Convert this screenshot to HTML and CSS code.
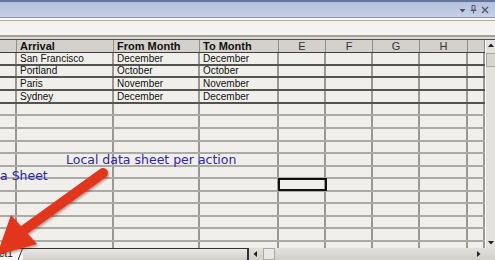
FILE: index.html
```html
<!DOCTYPE html>
<html lang="en">
<head>
    <meta charset="UTF-8">
    <title>Local Data Sheet</title>
    <link rel="stylesheet" href="styles.css">
</head>
<body>

<div class="window">
    <div class="titlebar">
        <svg class="tb-icon" width="7" height="8" viewBox="0 0 7 8"><path d="M0.5 3 L6.5 3 L3.5 6.5 Z" fill="#4f5566"/></svg>
        <svg class="tb-icon" width="7" height="9" viewBox="0 0 7 9"><path d="M2 0.5 H5 V5 H2 Z M0.5 5.5 H6.5 M3.5 5.5 V8.5" stroke="#4f5566" stroke-width="1" fill="none"/></svg>
        <svg class="tb-icon" width="8" height="8" viewBox="0 0 8 8"><path d="M1 1 L7 7 M7 1 L1 7" stroke="#4f5566" stroke-width="1.3"/></svg>
    </div>
    <div class="sep"></div>
    <div class="formula"></div>
    <div class="gap"></div>

    <div class="grid-area">
        <div class="sheet">
            <div class="row head">
                <div class="cell"></div>
                <div class="cell">Arrival</div>
                <div class="cell">From Month</div>
                <div class="cell">To Month</div>
                <div class="cell letter">E</div>
                <div class="cell letter">F</div>
                <div class="cell letter">G</div>
                <div class="cell letter">H</div>
                <div class="cell"></div>
            </div>
            <div class="row data">
                <div class="cell"></div><div class="cell">San Francisco</div><div class="cell">December</div><div class="cell">December</div>
                <div class="cell"></div><div class="cell"></div><div class="cell"></div><div class="cell"></div><div class="cell"></div>
            </div>
            <div class="row data short">
                <div class="cell"></div><div class="cell">Portland</div><div class="cell">October</div><div class="cell">October</div>
                <div class="cell"></div><div class="cell"></div><div class="cell"></div><div class="cell"></div><div class="cell"></div>
            </div>
            <div class="row data">
                <div class="cell"></div><div class="cell">Paris</div><div class="cell">November</div><div class="cell">November</div>
                <div class="cell"></div><div class="cell"></div><div class="cell"></div><div class="cell"></div><div class="cell"></div>
            </div>
            <div class="row data">
                <div class="cell"></div><div class="cell">Sydney</div><div class="cell">December</div><div class="cell">December</div>
                <div class="cell"></div><div class="cell"></div><div class="cell"></div><div class="cell"></div><div class="cell"></div>
            </div>
            <div class="row short"><div class="cell"></div><div class="cell"></div><div class="cell"></div><div class="cell"></div><div class="cell"></div><div class="cell"></div><div class="cell"></div><div class="cell"></div><div class="cell"></div></div>
            <div class="row"><div class="cell"></div><div class="cell"></div><div class="cell"></div><div class="cell"></div><div class="cell"></div><div class="cell"></div><div class="cell"></div><div class="cell"></div><div class="cell"></div></div>
            <div class="row"><div class="cell"></div><div class="cell"></div><div class="cell"></div><div class="cell"></div><div class="cell"></div><div class="cell"></div><div class="cell"></div><div class="cell"></div><div class="cell"></div></div>
            <div class="row short"><div class="cell"></div><div class="cell"></div><div class="cell"></div><div class="cell"></div><div class="cell"></div><div class="cell"></div><div class="cell"></div><div class="cell"></div><div class="cell"></div></div>
            <div class="row"><div class="cell"></div><div class="cell"></div><div class="cell"></div><div class="cell"></div><div class="cell"></div><div class="cell"></div><div class="cell"></div><div class="cell"></div><div class="cell"></div></div>
            <div class="row short"><div class="cell"></div><div class="cell"></div><div class="cell"></div><div class="cell"></div><div class="cell"></div><div class="cell"></div><div class="cell"></div><div class="cell"></div><div class="cell"></div></div>
            <div class="row"><div class="cell"></div><div class="cell"></div><div class="cell"></div><div class="cell"></div><div class="cell selected"></div><div class="cell"></div><div class="cell"></div><div class="cell"></div><div class="cell"></div></div>
            <div class="row short"><div class="cell"></div><div class="cell"></div><div class="cell"></div><div class="cell"></div><div class="cell"></div><div class="cell"></div><div class="cell"></div><div class="cell"></div><div class="cell"></div></div>
            <div class="row"><div class="cell"></div><div class="cell"></div><div class="cell"></div><div class="cell"></div><div class="cell"></div><div class="cell"></div><div class="cell"></div><div class="cell"></div><div class="cell"></div></div>
            <div class="row short"><div class="cell"></div><div class="cell"></div><div class="cell"></div><div class="cell"></div><div class="cell"></div><div class="cell"></div><div class="cell"></div><div class="cell"></div><div class="cell"></div></div>
            <div class="row"><div class="cell"></div><div class="cell"></div><div class="cell"></div><div class="cell"></div><div class="cell"></div><div class="cell"></div><div class="cell"></div><div class="cell"></div><div class="cell"></div></div>
            <div class="row"><div class="cell"></div><div class="cell"></div><div class="cell"></div><div class="cell"></div><div class="cell"></div><div class="cell"></div><div class="cell"></div><div class="cell"></div><div class="cell"></div></div>
        </div>

        <div class="vscroll">
            <div class="sbtn"><svg width="6" height="4" viewBox="0 0 6 4"><path d="M0 4 L3 0.5 L6 4 Z" fill="#222"/></svg></div>
            <div class="vthumb"></div>
            <div class="spacer"></div>
            <div class="sbtn"><svg width="6" height="4" viewBox="0 0 6 4"><path d="M0 0 L3 3.5 L6 0 Z" fill="#222"/></svg></div>
        </div>
    </div>

    <div class="bottombar">
        <div class="tab">et1</div>
        <svg class="tab-edge" width="5" height="12" viewBox="0 0 5 12"><path d="M0 12 L4.5 0.5" stroke="#333" stroke-width="1"/><path d="M0.5 0.5 H5" stroke="#333"/></svg>
        <div class="tabstrip"></div>
        <div class="hscroll">
            <div class="hbtn"><svg width="4" height="6" viewBox="0 0 4 6"><path d="M4 0 L0.5 3 L4 6 Z" fill="#222"/></svg></div>
            <div class="hthumb"></div>
            <div class="spacer"></div>
            <div class="hbtn"><svg width="4" height="6" viewBox="0 0 4 6"><path d="M0 0 L3.5 3 L0 6 Z" fill="#222"/></svg></div>
            <div class="corner"></div>
        </div>
    </div>

    <!-- annotation layer -->
    <div class="note note-local">Local data sheet per action</div>
    <div class="note note-global">a Sheet</div>
    <svg class="arrow" width="495" height="260" viewBox="0 0 495 260">
        <defs>
            <filter id="shadow" x="-20%" y="-20%" width="140%" height="140%">
                <feDropShadow dx="1" dy="1.5" stdDeviation="1" flood-color="#6a1a10" flood-opacity="0.45"/>
            </filter>
        </defs>
        <g filter="url(#shadow)" fill="#e2351f">
            <line x1="103" y1="173" x2="24" y2="230" stroke="#e2351f" stroke-width="10" stroke-linecap="round"/>
            <path d="M-3 255 L11 215 L37 244 Z"/>
        </g>
    </svg>
</div>

</body>
</html>
```

FILE: styles.css
```css
body {
    margin: 0;
    padding: 0;
    background-color: #fff;
    font-family: "Liberation Sans", Arial, sans-serif;
}
.window {
    position: relative;
    width: 495px;
    height: 260px;
    overflow: hidden;
    background-color: #f0efeb;
}
.titlebar {
    height: 18px;
    box-sizing: border-box;
    border-top: 2px solid #65749d;
    border-bottom: 1px solid #8e96ad;
    background: linear-gradient(#b5c0dc, #c7d0e7);
    display: flex;
    justify-content: flex-end;
    align-items: center;
    gap: 4px;
    padding-right: 6px;
}
.tb-icon {
    display: block;
}
.sep {
    height: 2px;
    background-color: #fafaf8;
}
.formula {
    height: 17px;
    box-sizing: border-box;
    border-top: 1px solid #aaa7a0;
    border-bottom: 2px solid #a3a098;
    background-color: #f4f3ef;
}
.gap {
    height: 2px;
    background-color: #dcd9d3;
}
.grid-area {
    display: flex;
    height: 209px;
    box-sizing: border-box;
    border-top: 1px solid #4d4d4d;
}
.sheet {
    width: 485px;
    overflow: hidden;
    background-color: #f0efeb;
}
.row {
    display: grid;
    grid-template-columns: 17px 97px 86px 79px 47px 47px 47px 48px 17px;
    height: 13px;
    box-sizing: border-box;
    border-bottom: 2px solid #acaaa6;
}
.row.short {
    height: 12px;
}
.row.head {
    background-color: #d4d1ca;
    border-bottom: 1px solid #3e3e3e;
}
.row.data {
    border-bottom-color: #555350;
}
.cell {
    border-right: 2px solid #9a9894;
    padding-left: 3px;
    font-size: 10px;
    line-height: 11px;
    color: #111;
    white-space: nowrap;
    overflow: hidden;
}
.short .cell {
    line-height: 10px;
}
.head .cell {
    font-size: 11px;
    line-height: 12px;
    font-weight: bold;
    border-right: 1px solid #8f8d89;
}
.head .letter {
    font-weight: normal;
    text-align: center;
    padding-left: 0;
    color: #333;
}
.cell.selected {
    overflow: visible;
    outline: 2px solid #111;
    outline-offset: -1px;
}
.vscroll {
    width: 10px;
    box-sizing: border-box;
    border-left: 1px solid #fdfdfc;
    background-color: #e4e2de;
    display: flex;
    flex-direction: column;
}
.sbtn {
    height: 10px;
    display: flex;
    justify-content: center;
    align-items: center;
}
.vthumb {
    height: 14px;
    margin-top: 3px;
    box-sizing: border-box;
    border: 1px solid #a9a7a2;
    border-right: none;
    background-color: #d7d5d0;
}
.spacer {
    flex: 1;
}
.bottombar {
    display: flex;
    height: 12px;
    background-color: #d9d7d2;
}
.tab {
    width: 18px;
    background-color: #f7f7f5;
    font-size: 10px;
    line-height: 11px;
    color: #111;
    text-indent: -1px;
    white-space: nowrap;
    overflow: hidden;
}
.tab-edge {
    display: block;
    background-color: #f7f7f5;
}
.tabstrip {
    width: 226px;
    box-sizing: border-box;
    border-top: 1px solid #333;
    border-right: 2px solid #333;
    background: linear-gradient(#ebeae6, #cfcdc8);
}
.hscroll {
    flex: 1;
    display: flex;
    align-items: stretch;
    background: linear-gradient(#e2e0dc, #d2d0cb);
}
.hbtn {
    width: 12px;
    display: flex;
    justify-content: center;
    align-items: center;
}
.hthumb {
    width: 12px;
    margin-left: 2px;
    box-sizing: border-box;
    border: 1px solid #aaa8a3;
    background-color: #e8e7e3;
}
.corner {
    width: 10px;
}
.note {
    position: absolute;
    font-family: "DejaVu Sans", Verdana, sans-serif;
    font-size: 12.5px;
    line-height: 15px;
    color: #2f25ad;
    white-space: nowrap;
}
.note-local {
    left: 66px;
    top: 152px;
}
.note-global {
    left: 0;
    top: 168px;
}
.arrow {
    position: absolute;
    left: 0;
    top: 0;
    pointer-events: none;
}
```
